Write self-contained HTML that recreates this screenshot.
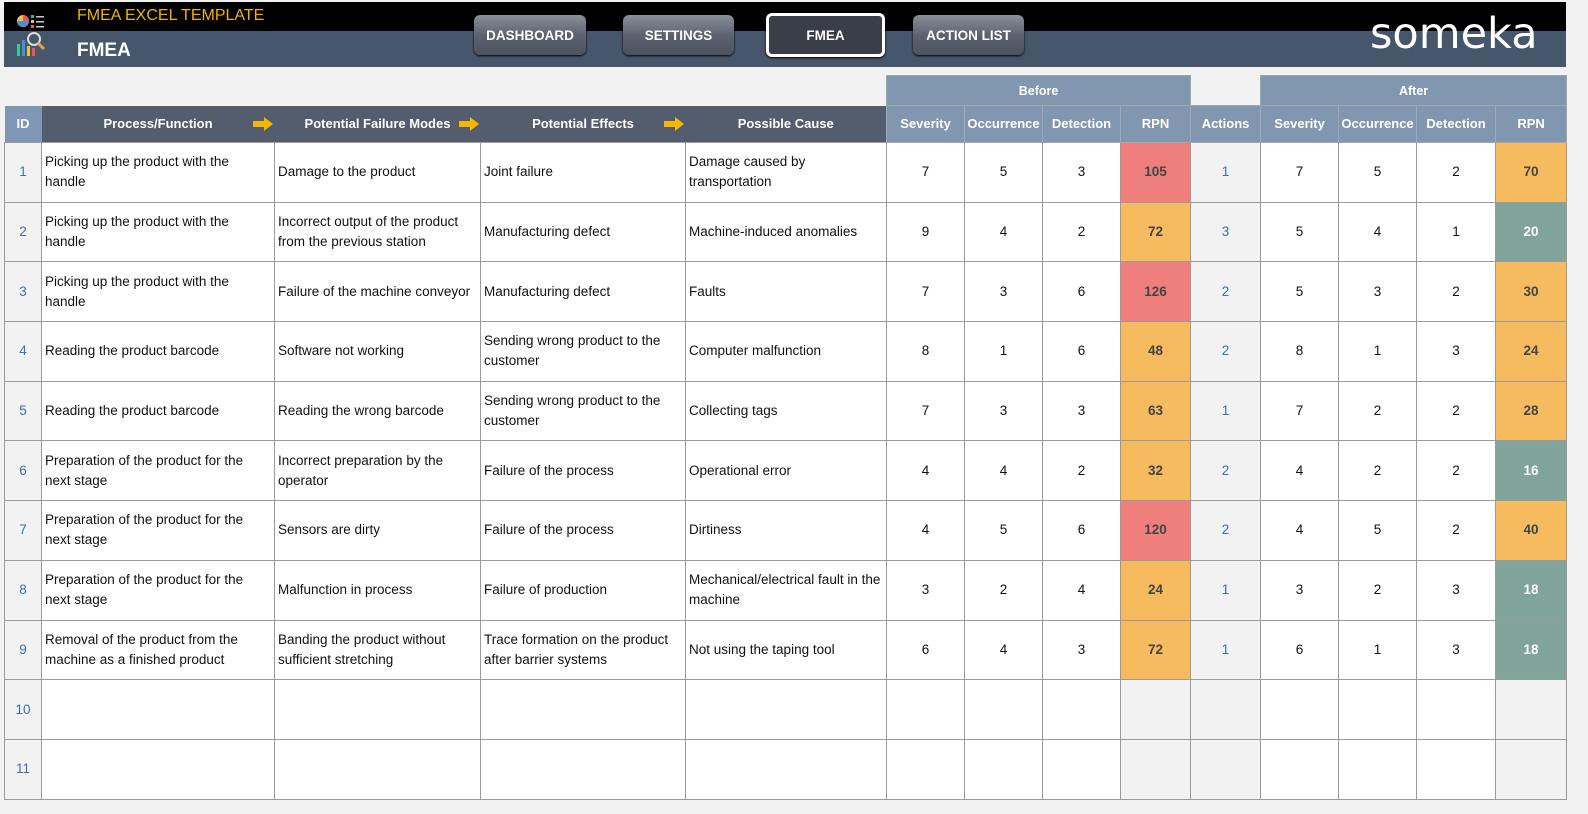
<!DOCTYPE html>
<html style="overflow:hidden;width:1588px;height:814px"><head><meta charset="utf-8"><style>
*{margin:0;padding:0;box-sizing:border-box}
body{width:1588px;height:814px;background:#f2f2f2;font-family:"Liberation Sans",sans-serif;position:relative;overflow:hidden}
#w{position:absolute;left:0;top:0;width:1588px;height:814px;overflow:hidden}
.top{position:absolute;left:4px;top:2px;width:1562px;height:29px;background:#000}
.band{position:absolute;left:4px;top:31px;width:1562px;height:36px;background:#46566b}
.t1{position:absolute;left:77px;top:7px;color:#f0b400;font-size:16px}
.t2{position:absolute;left:77px;top:40px;color:#fff;font-size:19px;font-weight:bold}
.btn{position:absolute;top:15px;height:40px;border-radius:6px;background:linear-gradient(#8a909a,#5c6270 50%,#4c525e);color:#fff;font-weight:bold;font-size:13.5px;display:flex;align-items:center;justify-content:center;box-shadow:0 1px 2px #000}
.btn.act{background:#3a3e48;border:3px solid #fff;top:13px;height:44px}
.logo{position:absolute;left:1370px;top:9px;width:185px;overflow:hidden;white-space:nowrap;color:#fff;font-size:43px;line-height:50px;font-family:"DejaVu Sans",sans-serif}
table{position:absolute;left:4px;top:75px;width:1562px;border-collapse:collapse;table-layout:fixed;font-size:13.5px}
td{border:1px solid #9a9a9a;height:59.7px;padding:0 3px;color:#111;line-height:20px;background:#fff}
td.c{text-align:center}
td.id{background:#f2f2f2;color:#3b6fb8;text-align:center}
td.ac{background:#f2f2f2;color:#3b6fb8;text-align:center}
td.r{background:#ef7f7c;color:#444;font-weight:bold;text-align:center}
td.o{background:#f5bb5e;color:#444;font-weight:bold;text-align:center}
td.g{background:#80a39a;color:#fff;font-weight:bold;text-align:center}
td.e{background:#f2f2f2}
tr.h1 td{height:30px;border:none;background:transparent}
tr.h1 td.b{background:#8197b0;color:#fff;font-weight:bold;text-align:center;border:1px solid #9aa;font-size:12.5px}
tr.h2 td{height:37px;background:#535d6d;color:#fff;font-weight:bold;text-align:center;border:none;font-size:13px;padding:0}
tr.h2 td.l{background:#8197b0;border:1px solid #a0a8b5}
tr.h2 td.i{background:#7f97b4}
.arr{position:absolute;right:2px;top:11px;width:20px;height:14px}
tr.h2 td{position:relative}
</style></head><body><div id="w">
<div class="top"></div><div class="band"></div>
<svg style="position:absolute;left:14px;top:10px" width="48" height="48" viewBox="0 0 48 48">
<circle cx="9" cy="11" r="6" fill="#f0c040"/><path d="M9 11V5A6 6 0 0 1 15 11Z" fill="#e55"/><path d="M9 11H15A6 6 0 0 1 3 11Z" fill="#4a90d9"/>
<rect x="17" y="5" width="3" height="3" fill="#4aa8e0"/><rect x="22" y="6" width="8" height="1.5" fill="#ccc"/>
<rect x="17" y="10" width="3" height="3" fill="#f0c040"/><rect x="22" y="11" width="8" height="1.5" fill="#ccc"/>
<rect x="17" y="15" width="3" height="3" fill="#e55"/><rect x="22" y="16" width="8" height="1.5" fill="#ccc"/>
<rect x="3" y="34" width="3" height="12" fill="#3c9"/><rect x="8" y="30" width="3" height="16" fill="#4a90d9"/><rect x="13" y="36" width="3" height="10" fill="#f0c040"/><rect x="18" y="38" width="3" height="8" fill="#e55"/>
<circle cx="20" cy="29" r="6" fill="none" stroke="#ddd" stroke-width="2"/><line x1="24" y1="33" x2="30" y2="39" stroke="#e9a040" stroke-width="3"/>
</svg>
<div class="t1">FMEA EXCEL TEMPLATE</div><div class="t2">FMEA</div>
<div class="btn" style="left:474px;width:112px">DASHBOARD</div>
<div class="btn" style="left:623px;width:111px">SETTINGS</div>
<div class="btn act" style="left:766px;width:119px">FMEA</div>
<div class="btn" style="left:913px;width:111px">ACTION LIST</div>
<div class="logo">someka</div>
<table>
<colgroup><col style="width:37px"><col style="width:233px"><col style="width:206px"><col style="width:205px"><col style="width:201px"><col style="width:78px"><col style="width:78px"><col style="width:78px"><col style="width:70px"><col style="width:70px"><col style="width:78px"><col style="width:78px"><col style="width:79px"><col style="width:71px"></colgroup>
<tr class="h1"><td></td><td></td><td></td><td></td><td></td><td class="b" colspan="4">Before</td><td></td><td class="b" colspan="4">After</td></tr>
<tr class="h2"><td class="i">ID</td><td>Process/Function<svg class="arr" viewBox="0 0 20 14"><path d="M0 4H11V0L20 7 11 14V10H0Z" fill="#f5b800"/></svg></td><td>Potential Failure Modes<svg class="arr" viewBox="0 0 20 14"><path d="M0 4H11V0L20 7 11 14V10H0Z" fill="#f5b800"/></svg></td><td>Potential Effects<svg class="arr" viewBox="0 0 20 14"><path d="M0 4H11V0L20 7 11 14V10H0Z" fill="#f5b800"/></svg></td><td>Possible Cause</td><td class="l">Severity</td><td class="l">Occurrence</td><td class="l">Detection</td><td class="l">RPN</td><td class="l">Actions</td><td class="l">Severity</td><td class="l">Occurrence</td><td class="l">Detection</td><td class="l">RPN</td></tr>
<tr><td class="id">1</td><td>Picking up the product with the handle</td><td>Damage to the product</td><td>Joint failure</td><td>Damage caused by transportation</td><td class="c">7</td><td class="c">5</td><td class="c">3</td><td class="r">105</td><td class="ac">1</td><td class="c">7</td><td class="c">5</td><td class="c">2</td><td class="o">70</td></tr>
<tr><td class="id">2</td><td>Picking up the product with the handle</td><td>Incorrect output of the product from the previous station</td><td>Manufacturing defect</td><td>Machine-induced anomalies</td><td class="c">9</td><td class="c">4</td><td class="c">2</td><td class="o">72</td><td class="ac">3</td><td class="c">5</td><td class="c">4</td><td class="c">1</td><td class="g">20</td></tr>
<tr><td class="id">3</td><td>Picking up the product with the handle</td><td>Failure of the machine conveyor</td><td>Manufacturing defect</td><td>Faults</td><td class="c">7</td><td class="c">3</td><td class="c">6</td><td class="r">126</td><td class="ac">2</td><td class="c">5</td><td class="c">3</td><td class="c">2</td><td class="o">30</td></tr>
<tr><td class="id">4</td><td>Reading the product barcode</td><td>Software not working</td><td>Sending wrong product to the customer</td><td>Computer malfunction</td><td class="c">8</td><td class="c">1</td><td class="c">6</td><td class="o">48</td><td class="ac">2</td><td class="c">8</td><td class="c">1</td><td class="c">3</td><td class="o">24</td></tr>
<tr><td class="id">5</td><td>Reading the product barcode</td><td>Reading the wrong barcode</td><td>Sending wrong product to the customer</td><td>Collecting tags</td><td class="c">7</td><td class="c">3</td><td class="c">3</td><td class="o">63</td><td class="ac">1</td><td class="c">7</td><td class="c">2</td><td class="c">2</td><td class="o">28</td></tr>
<tr><td class="id">6</td><td>Preparation of the product for the next stage</td><td>Incorrect preparation by the operator</td><td>Failure of the process</td><td>Operational error</td><td class="c">4</td><td class="c">4</td><td class="c">2</td><td class="o">32</td><td class="ac">2</td><td class="c">4</td><td class="c">2</td><td class="c">2</td><td class="g">16</td></tr>
<tr><td class="id">7</td><td>Preparation of the product for the next stage</td><td>Sensors are dirty</td><td>Failure of the process</td><td>Dirtiness</td><td class="c">4</td><td class="c">5</td><td class="c">6</td><td class="r">120</td><td class="ac">2</td><td class="c">4</td><td class="c">5</td><td class="c">2</td><td class="o">40</td></tr>
<tr><td class="id">8</td><td>Preparation of the product for the next stage</td><td>Malfunction in process</td><td>Failure of production</td><td>Mechanical/electrical fault in the machine</td><td class="c">3</td><td class="c">2</td><td class="c">4</td><td class="o">24</td><td class="ac">1</td><td class="c">3</td><td class="c">2</td><td class="c">3</td><td class="g">18</td></tr>
<tr><td class="id">9</td><td>Removal of the product from the machine as a finished product</td><td>Banding the product without sufficient stretching</td><td>Trace formation on the product after barrier systems</td><td>Not using the taping tool</td><td class="c">6</td><td class="c">4</td><td class="c">3</td><td class="o">72</td><td class="ac">1</td><td class="c">6</td><td class="c">1</td><td class="c">3</td><td class="g">18</td></tr>
<tr><td class="id">10</td><td></td><td></td><td></td><td></td><td></td><td></td><td></td><td class="e"></td><td class="e"></td><td></td><td></td><td></td><td class="e"></td></tr>
<tr><td class="id">11</td><td></td><td></td><td></td><td></td><td></td><td></td><td></td><td class="e"></td><td class="e"></td><td></td><td></td><td></td><td class="e"></td></tr>
</table>
</div></body></html>
